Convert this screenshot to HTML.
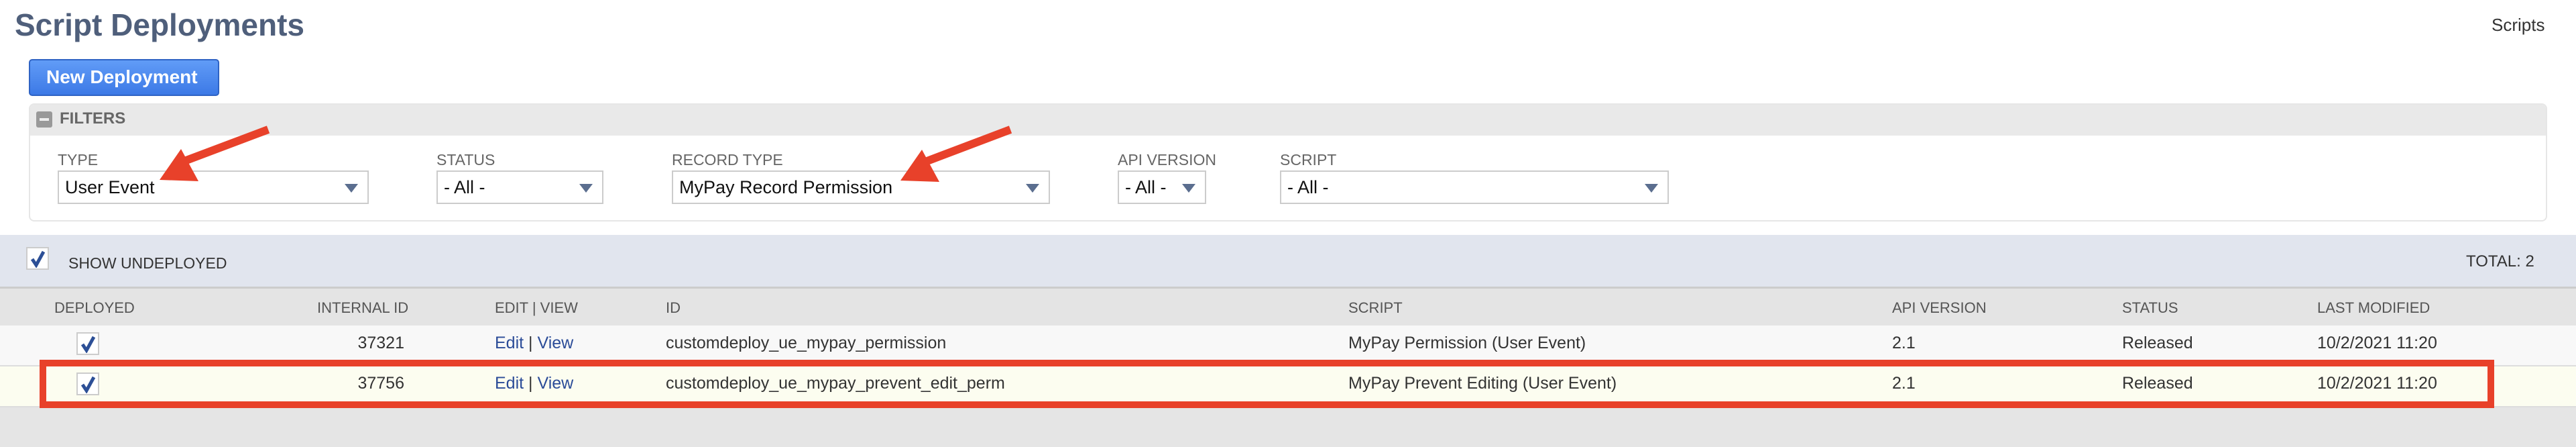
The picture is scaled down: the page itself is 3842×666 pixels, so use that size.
<!DOCTYPE html>
<html><head><meta charset="utf-8"><style>
*{margin:0;padding:0;box-sizing:border-box}
body{width:3842px;height:666px;background:#fff;position:relative;overflow:hidden;font-family:"Liberation Sans",sans-serif;color:#333}
.a{position:absolute;white-space:nowrap}
.lbl{font-size:23px;color:#666;top:225px}
.sel{position:absolute;top:254px;height:50px;border:2px solid #ccc;background:#fff;font-size:27px;color:#111;padding:8px 0 0 9px;white-space:nowrap}
.sel i{position:absolute;right:14px;top:18px;width:0;height:0;border-left:10px solid transparent;border-right:10px solid transparent;border-top:13px solid #5b6e8f}
.th{font-size:22px;color:#555;top:446px}
.td{font-size:25px;color:#333}
.cb{position:absolute;width:34px;height:34px;border:2px solid #ccc;background:#fff}
.cb svg{position:absolute;left:4px;top:3px}
a{color:#2b4c98;text-decoration:none}
</style></head><body>
<div class="a" style="left:22px;top:10px;font-size:46px;font-weight:bold;color:#4f5f7b">Script Deployments</div>
<div class="a" style="left:3716px;top:22px;font-size:26px;color:#333">Scripts</div>
<div class="a" style="left:43px;top:88px;width:284px;height:55px;border:2px solid #2f63c4;border-radius:5px;background:linear-gradient(#619cf7,#3c79e6);color:#fff;font-weight:bold;font-size:28px;padding:9px 0 0 24px">New Deployment</div>

<div class="a" style="left:43px;top:154px;width:3756px;height:176px;border:2px solid #e6e6e6;border-radius:8px;background:#fff;overflow:hidden">
 <div style="height:46px;background:#e9e9e9"></div>
</div>
<div class="a" style="left:54px;top:166px;width:24px;height:24px;background:#999;border-radius:3px"></div>
<div class="a" style="left:59px;top:176px;width:14px;height:4px;background:#eee"></div>
<div class="a" style="left:89px;top:163px;font-size:24px;font-weight:bold;color:#666">FILTERS</div>

<div class="a lbl" style="left:86px">TYPE</div>
<div class="sel" style="left:86px;width:464px">User Event<i></i></div>
<div class="a lbl" style="left:651px">STATUS</div>
<div class="sel" style="left:651px;width:249px">- All -<i></i></div>
<div class="a lbl" style="left:1002px">RECORD TYPE</div>
<div class="sel" style="left:1002px;width:564px">MyPay Record Permission<i></i></div>
<div class="a lbl" style="left:1667px">API VERSION</div>
<div class="sel" style="left:1667px;width:132px">- All -<i></i></div>
<div class="a lbl" style="left:1909px">SCRIPT</div>
<div class="sel" style="left:1909px;width:580px">- All -<i></i></div>

<svg class="a" style="left:0;top:0" width="3842" height="666">
 <line x1="400" y1="193" x2="275" y2="240" stroke="#e8412a" stroke-width="12"/>
 <polygon points="238,268 270,222 296,270" fill="#e8412a"/>
 <line x1="1507" y1="193" x2="1380" y2="241" stroke="#e8412a" stroke-width="12"/>
 <polygon points="1343,269 1375,223 1401,271" fill="#e8412a"/>
</svg>

<div class="a" style="left:0;top:350px;width:3842px;height:78px;background:#e1e5ee"></div>
<div class="a" style="left:0;top:427px;width:3842px;height:3px;background:#ccc"></div>
<div class="cb" style="left:39px;top:368px"><svg width="24" height="26" viewBox="0 0 24 26"><path d="M3 13 L9 22 L20 2" fill="none" stroke="#2c4f96" stroke-width="5"/></svg></div>
<div class="a" style="left:102px;top:379px;font-size:23px;color:#333">SHOW UNDEPLOYED</div>
<div class="a" style="left:3678px;top:376px;font-size:24px;color:#333">TOTAL: 2</div>

<div class="a" style="left:0;top:430px;width:3842px;height:55px;background:#e4e4e4"></div>
<div class="a th" style="left:81px">DEPLOYED</div>
<div class="a th" style="left:473px;width:130px;text-align:right">INTERNAL ID</div>
<div class="a th" style="left:738px">EDIT | VIEW</div>
<div class="a th" style="left:993px">ID</div>
<div class="a th" style="left:2011px">SCRIPT</div>
<div class="a th" style="left:2822px">API VERSION</div>
<div class="a th" style="left:3165px">STATUS</div>
<div class="a th" style="left:3456px">LAST MODIFIED</div>

<div class="a" style="left:0;top:485px;width:3842px;height:59px;background:#f8f8f8"></div>
<div class="a" style="left:0;top:544px;width:3842px;height:2px;background:#ddd"></div>
<div class="a" style="left:0;top:546px;width:3842px;height:59px;background:#fcfdf0"></div>
<div class="a" style="left:0;top:605px;width:3842px;height:2px;background:#ddd"></div>
<div class="a" style="left:0;top:607px;width:3842px;height:59px;background:#e5e5e5"></div>

<div class="cb" style="left:114px;top:495px"><svg width="24" height="26" viewBox="0 0 24 26"><path d="M3 13 L9 22 L20 2" fill="none" stroke="#2c4f96" stroke-width="5"/></svg></div>
<div class="a td" style="left:473px;top:497px;width:130px;text-align:right">37321</div>
<div class="a td" style="left:738px;top:497px"><a>Edit</a> | <a>View</a></div>
<div class="a td" style="left:993px;top:497px">customdeploy_ue_mypay_permission</div>
<div class="a td" style="left:2011px;top:497px">MyPay Permission (User Event)</div>
<div class="a td" style="left:2822px;top:497px">2.1</div>
<div class="a td" style="left:3165px;top:497px">Released</div>
<div class="a td" style="left:3456px;top:497px">10/2/2021 11:20</div>

<div class="cb" style="left:114px;top:555px"><svg width="24" height="26" viewBox="0 0 24 26"><path d="M3 13 L9 22 L20 2" fill="none" stroke="#2c4f96" stroke-width="5"/></svg></div>
<div class="a td" style="left:473px;top:557px;width:130px;text-align:right">37756</div>
<div class="a td" style="left:738px;top:557px"><a>Edit</a> | <a>View</a></div>
<div class="a td" style="left:993px;top:557px">customdeploy_ue_mypay_prevent_edit_perm</div>
<div class="a td" style="left:2011px;top:557px">MyPay Prevent Editing (User Event)</div>
<div class="a td" style="left:2822px;top:557px">2.1</div>
<div class="a td" style="left:3165px;top:557px">Released</div>
<div class="a td" style="left:3456px;top:557px">10/2/2021 11:20</div>

<div class="a" style="left:59px;top:536px;width:3661px;height:72px;border:10px solid #e8412a"></div>
</body></html>
